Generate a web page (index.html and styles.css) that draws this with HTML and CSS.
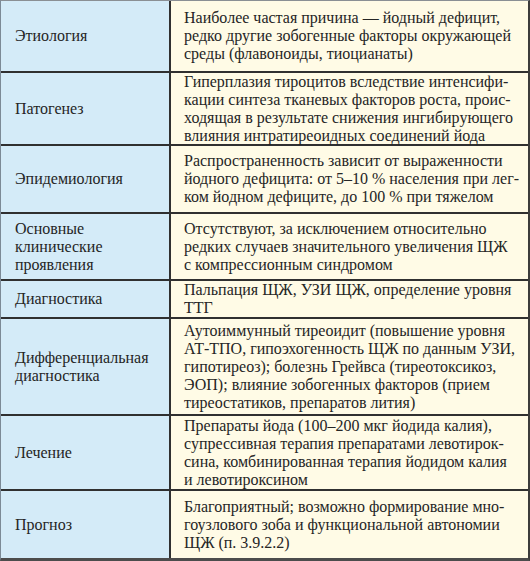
FILE: index.html
```html
<!DOCTYPE html>
<html lang="ru">
<head>
<meta charset="utf-8">
<link rel="stylesheet" href="styles.css">
</head>
<body>
<div class="tbl">
  <div class="k">Этиология</div><div class="v">Наиболее частая причина — йодный дефицит,<br>редко другие зобогенные факторы окружающей<br>среды (флавоноиды, тиоцианаты)</div>
  <div class="k">Патогенез</div><div class="v">Гиперплазия тироцитов вследствие интенсифи-<br>кации синтеза тканевых факторов роста, проис-<br>ходящая в результате снижения ингибирующего<br>влияния интратиреоидных соединений йода</div>
  <div class="k">Эпидемиология</div><div class="v">Распространенность зависит от выраженности<br>йодного дефицита: от 5–10 % населения при лег-<br>ком йодном дефиците, до 100 % при тяжелом</div>
  <div class="k">Основные<br>клинические<br>проявления</div><div class="v">Отсутствуют, за исключением относительно<br>редких случаев значительного увеличения ЩЖ<br>с компрессионным синдромом</div>
  <div class="k">Диагностика</div><div class="v">Пальпация ЩЖ, УЗИ ЩЖ, определение уровня<br>ТТГ</div>
  <div class="k">Дифференциальная<br>диагностика</div><div class="v">Аутоиммунный тиреоидит (повышение уровня<br>АТ-ТПО, гипоэхогенность ЩЖ по данным УЗИ,<br>гипотиреоз); болезнь Грейвса (тиреотоксикоз,<br>ЭОП); влияние зобогенных факторов (прием<br>тиреостатиков, препаратов лития)</div>
  <div class="k">Лечение</div><div class="v">Препараты йода (100–200 мкг йодида калия),<br>супрессивная терапия препаратами левотирок-<br>сина, комбинированная терапия йодидом калия<br>и левотироксином</div>
  <div class="k last">Прогноз</div><div class="v last">Благоприятный; возможно формирование мно-<br>гоузлового зоба и функциональной автономии<br>ЩЖ (п. 3.9.2.2)</div>
</div>
</body>
</html>
```
FILE: styles.css
```css
html, body {
  margin: 0;
  padding: 0;
  background: #ffffff;
}
.tbl {
  box-sizing: border-box;
  width: 530px;
  height: 561px;
  display: grid;
  grid-template-columns: 170px 1fr;
  grid-template-rows: 72px 73px 68px 67px 38px 97px 75px 67px;
  border-top: 1px solid #8a8f94;
  border-left: 1px solid #7c8a96;
  border-right: 2px solid #3c3c3c;
  border-bottom: 3px solid #4c4c4c;
  font-family: "Liberation Serif", "Times New Roman", serif;
  font-size: 16px;
  line-height: 18px;
  color: #252525;
}
.k, .v {
  box-sizing: border-box;
  display: flex;
  align-items: center;
  border-bottom: 2px solid #303030;
  white-space: nowrap;
}
.k {
  background: #d4ebf8;
  border-right: 2px solid #303030;
  padding-left: 14px;
}
.v {
  background: #fffbe6;
  padding-left: 13px;
}
.last {
  border-bottom: none;
}
```
